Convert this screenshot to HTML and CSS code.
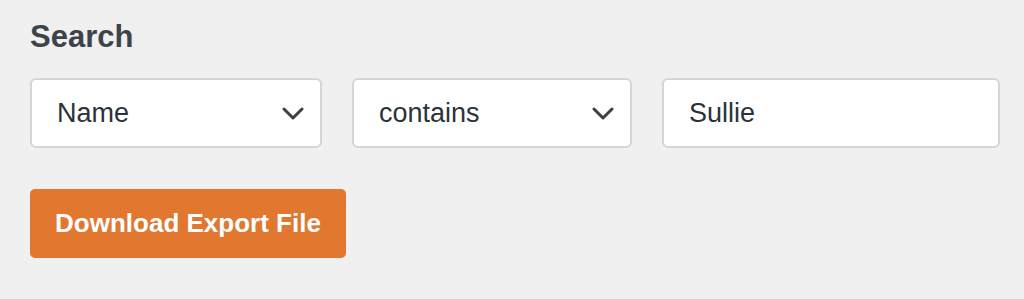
FILE: index.html
```html
<!DOCTYPE html>
<html lang="en">
  <head>
    <meta charset="UTF-8" />
    <meta name="viewport" content="width=device-width, initial-scale=1.0" />
    <title>Export Search</title>
    <link rel="stylesheet" href="styles.css">
  </head>
  <body>
    <div class="export">
      <h2 class="export-title">Search</h2>
      <div class="search-row">
        <div class="field select field-name">
          <span>Name</span>
          <svg class="chevron" width="22" height="13" viewBox="0 0 22 13">
            <path d="M2 2 L11 11 L20 2" fill="none" stroke="#3c3f44" stroke-width="3" stroke-linecap="round" stroke-linejoin="round" />
          </svg>
        </div>
        <div class="field select field-op">
          <span>contains</span>
          <svg class="chevron" width="22" height="13" viewBox="0 0 22 13">
            <path d="M2 2 L11 11 L20 2" fill="none" stroke="#3c3f44" stroke-width="3" stroke-linecap="round" stroke-linejoin="round" />
          </svg>
        </div>
        <div class="field field-value">
          <span>Sullie</span>
        </div>
      </div>
      <button class="btn-export">Download Export File</button>
    </div>
  </body>
</html>
```

FILE: styles.css
```css
*,
::before,
::after {
  box-sizing: border-box;
}

body {
  margin: 0;
  font-family: "Liberation Sans", Arial, sans-serif;
  background-color: #f0f0f1;
  color: #2c3338;
}

.export {
  padding: 0 30px;
}

.export-title {
  margin: 0;
  padding-top: 17px;
  font-size: 31px;
  line-height: 40px;
  font-weight: 700;
  color: #3c434a;
}

.search-row {
  display: flex;
  gap: 30px;
  margin-top: 21px;
}

.field {
  flex: none;
  display: flex;
  align-items: center;
  justify-content: space-between;
  height: 70px;
  padding: 0 16px 0 25px;
  background: #fff;
  border: 2px solid #d4d5d7;
  border-radius: 6px;
  font-size: 27px;
  color: #2c3338;
}

.field-name {
  width: 292px;
}

.field-op {
  width: 280px;
}

.field-value {
  width: 338px;
}

.chevron {
  display: block;
}

.btn-export {
  display: block;
  margin-top: 41px;
  width: 316px;
  height: 69px;
  padding: 0;
  border: none;
  border-radius: 5px;
  background-color: #e27730;
  color: #fff;
  font-family: inherit;
  font-size: 26px;
  font-weight: 700;
}
```
